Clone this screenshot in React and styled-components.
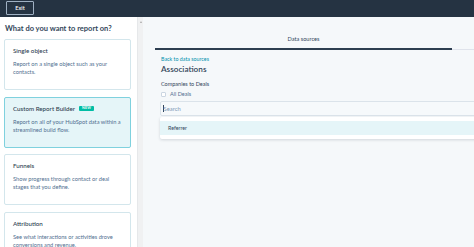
import React from "react";
import styled, { createGlobalStyle } from "styled-components";

const Global = createGlobalStyle`
  html, body { margin: 0; padding: 0; background: #f5f8fa; }
  body { font-family: Lato, "Open Sans", sans-serif; -webkit-font-smoothing: antialiased; }
  * { box-sizing: border-box; }
`;

const Page = styled.div`
  width: 474px;
  height: 247px;
  display: flex;
  flex-direction: column;
  overflow: hidden;
`;

const TopBar = styled.div`
  height: 17px;
  flex: none;
  background: #253342;
  display: flex;
  align-items: flex-start;
  padding: 1px 0 0 6px;
`;

const ExitButton = styled.button`
  width: 28px;
  height: 14px;
  border: 1px solid #9fb0c2;
  border-radius: 1px;
  background: transparent;
  color: #fff;
  font-family: Lato, sans-serif;
  font-size: 5.5px;
  font-weight: 600;
  padding: 0;
  line-height: 12px;
`;

const Body = styled.div`
  flex: 1;
  display: flex;
  min-height: 0;
`;

const LeftPanel = styled.div`
  width: 137px;
  flex: none;
  background: #fff;
  padding: 6px 6px 0 4px;
  overflow: hidden;
`;

const Heading = styled.h2`
  margin: 0 0 4px 1px;
  font-size: 7.5px;
  line-height: 12px;
  font-weight: 700;
  color: #33475b;
  white-space: nowrap;
`;

const CardList = styled.div`
  display: flex;
  flex-direction: column;
  gap: 6.5px;
`;

const Card = styled.div`
  height: 51px;
  flex: none;
  border: 1px solid ${(p) => (p.$selected ? "#7fd1de" : "#d3e6ec")};
  background: ${(p) => (p.$selected ? "#e5f5f8" : "#fff")};
  border-radius: 2px;
  padding: 7px 8px 0 8px;
`;

const CardTitle = styled.div`
  display: flex;
  align-items: center;
  gap: 4px;
  font-size: 6.2px;
  line-height: 8px;
  font-weight: 500;
  color: #2d3e50;
  white-space: nowrap;
`;

const Badge = styled.span`
  background: #00bda5;
  color: #fff;
  font-size: 3.5px;
  font-weight: 700;
  line-height: 5.4px;
  height: 5.4px;
  padding: 0 3px;
  border-radius: 1px;
  letter-spacing: 0.2px;
`;

const CardDesc = styled.p`
  margin: 5px 0 0 0;
  font-size: 5.7px;
  line-height: 8.3px;
  color: #516f90;
`;

const ScrollTrack = styled.div`
  width: 6px;
  flex: none;
  background: #f0f1f2;
  border-left: 1px solid #e6e8ea;
  display: flex;
  justify-content: center;
  padding-top: 4px;
`;

const ScrollArrow = styled.div`
  width: 0;
  height: 0;
  border-left: 1.5px solid transparent;
  border-right: 1.5px solid transparent;
  border-bottom: 2px solid #a8a8a8;
`;

const RightPanel = styled.div`
  flex: 1;
  background: #f5f8fa;
  overflow: hidden;
  padding: 13px 0 0 12px;
`;

const Tabs = styled.div`
  display: flex;
  width: 340px;
`;

const Tab = styled.div`
  flex: ${(p) => (p.$selected ? "0 0 297px" : "1")};
  height: 19.5px;
  text-align: center;
  font-size: 5.6px;
  line-height: 18px;
  color: #33475b;
  border-bottom: ${(p) => (p.$selected ? "2px solid #2d3e50" : "1px solid #dfe3eb")};
  align-self: ${(p) => (p.$selected ? "auto" : "flex-start")};
  margin-top: ${(p) => (p.$selected ? "0" : "0.5px")};
`;

const Content = styled.div`
  padding: 6px 0 0 6px;
  display: flex;
  flex-direction: column;
`;

const BackLink = styled.a`
  font-size: 5.3px;
  line-height: 7px;
  color: #0091ae;
  text-decoration: none;
`;

const Title = styled.h3`
  margin: 0;
  font-size: 8.2px;
  line-height: 12px;
  font-weight: 600;
  color: #33475b;
`;

const Label = styled.div`
  margin-top: 5px;
  font-size: 5.5px;
  line-height: 8px;
  color: #33475b;
`;

const CheckRow = styled.label`
  margin-top: 3px;
  display: flex;
  align-items: center;
  gap: 4px;
  font-size: 5.5px;
  line-height: 7px;
  color: #516f90;
`;

const Box = styled.span`
  width: 5px;
  height: 5px;
  border: 1px solid #cbd6e2;
  background: #fff;
  border-radius: 1px;
`;

const SearchField = styled.div`
  margin-top: 3px;
  margin-left: -1px;
  width: 360px;
  height: 15px;
  border: 1px solid #dbe3ea;
  border-radius: 2px;
  background: #f6f9fb;
  display: flex;
  align-items: center;
  padding-left: 2px;
  font-size: 5.8px;
  color: #7c98b6;
`;

const Caret = styled.span`
  width: 0.6px;
  height: 7px;
  background: #33475b;
`;

const Dropdown = styled.div`
  margin-top: 1px;
  margin-left: -1px;
  width: 360px;
  background: #fff;
  padding: 4px 0;
  box-shadow: 0 1px 3px rgba(45, 62, 80, 0.18);
  border-radius: 2px;
`;

const Option = styled.div`
  height: 14px;
  background: #e5f5f8;
  padding-left: 8px;
  font-size: 5.3px;
  line-height: 14px;
  color: #33475b;
`;

const cards = [
  { title: "Single object", desc: "Report on a single object such as your contacts." },
  { title: "Custom Report Builder", badge: "NEW", selected: true, desc: "Report on all of your HubSpot data within a streamlined build flow." },
  { title: "Funnels", desc: "Show progress through contact or deal stages that you define." },
  { title: "Attribution", desc: "See what interactions or activities drove conversions and revenue." },
];

export default function App() {
  return (
    <Page>
      <Global />
      <TopBar>
        <ExitButton>Exit</ExitButton>
      </TopBar>
      <Body>
        <LeftPanel>
          <Heading>What do you want to report on?</Heading>
          <CardList>
            {cards.map((c) => (
              <Card key={c.title} $selected={c.selected}>
                <CardTitle>
                  {c.title}
                  {c.badge && <Badge>{c.badge}</Badge>}
                </CardTitle>
                <CardDesc>{c.desc}</CardDesc>
              </Card>
            ))}
          </CardList>
        </LeftPanel>
        <ScrollTrack>
          <ScrollArrow />
        </ScrollTrack>
        <RightPanel>
          <Tabs>
            <Tab $selected>Data sources</Tab>
            <Tab />
          </Tabs>
          <Content>
            <BackLink href="#">Back to data sources</BackLink>
            <Title>Associations</Title>
            <Label>Companies to Deals</Label>
            <CheckRow>
              <Box />
              All Deals
            </CheckRow>
            <SearchField>
              <Caret />
              Search
            </SearchField>
            <Dropdown>
              <Option>Referrer</Option>
            </Dropdown>
          </Content>
        </RightPanel>
      </Body>
    </Page>
  );
}
